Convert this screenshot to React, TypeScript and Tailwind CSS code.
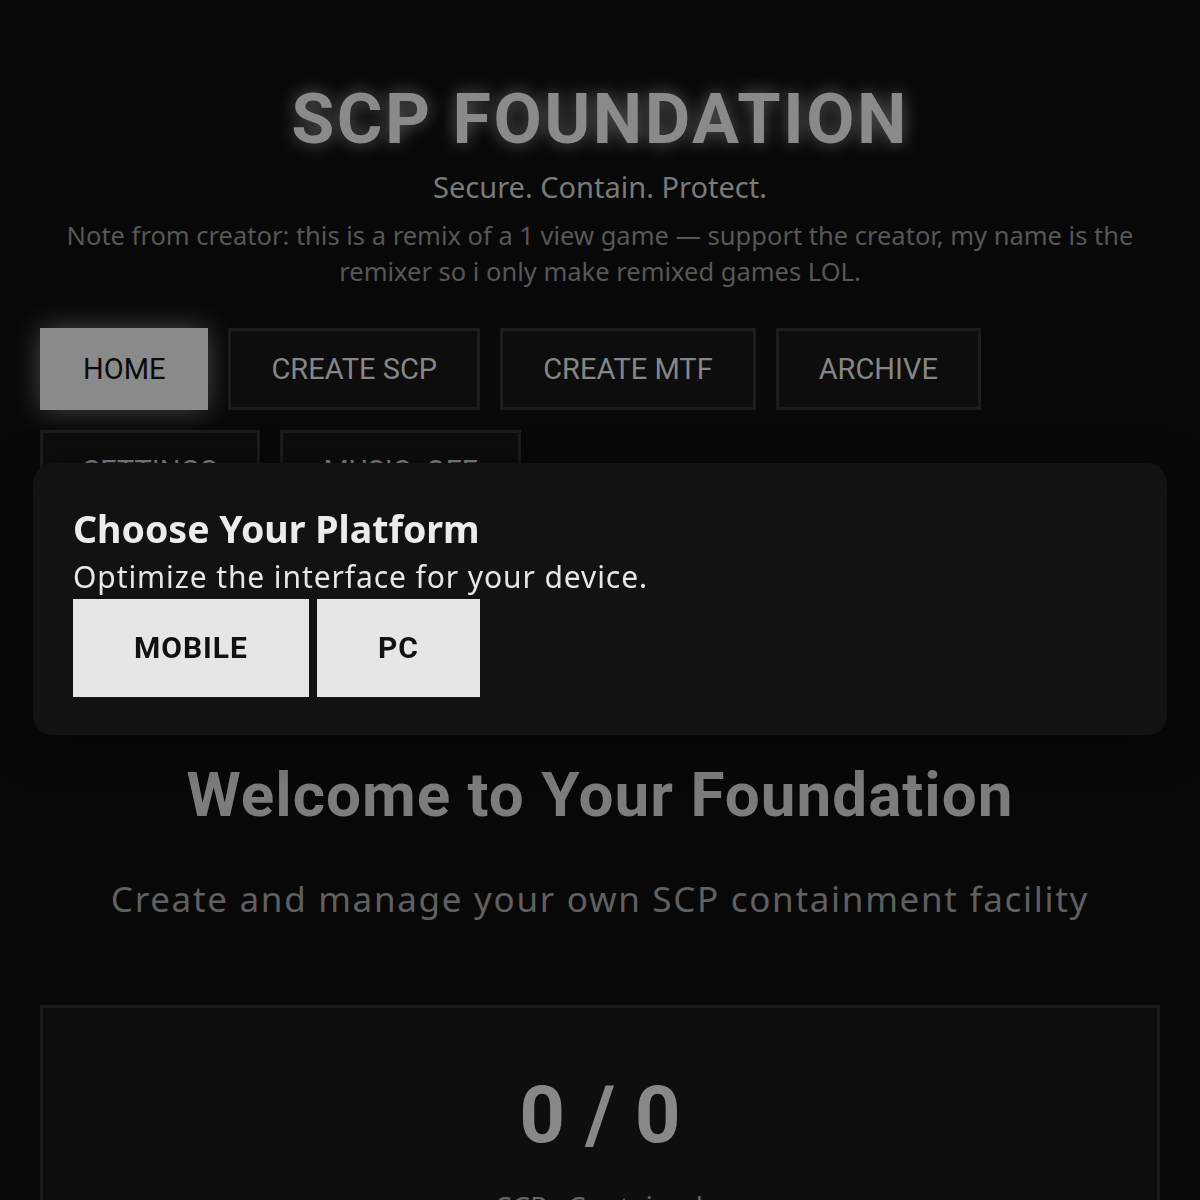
import React, { useState } from 'react';

const navItems = ['HOME', 'CREATE SCP', 'CREATE MTF', 'ARCHIVE', 'SETTINGS', 'MUSIC: OFF'];

export default function App() {
  const [active, setActive] = useState('HOME');
  const [platform, setPlatform] = useState<'mobile' | 'pc' | null>(null);
  const contained = 0;
  const total = 0;

  return (
    <div className="min-h-screen bg-[#080808] font-['Noto_Sans',sans-serif] overflow-hidden">
      {/* header */}
      <header className="text-center pt-[84px] px-10">
        <h1 className="font-['Roboto',sans-serif] font-bold text-[70px] leading-none tracking-[2.5px] text-[#8a8a8a] [text-shadow:0_0_18px_rgba(255,255,255,0.35)]">
          SCP FOUNDATION
        </h1>
        <p className="mt-[11px] text-[29px] text-[#7a7a7a]">Secure. Contain. Protect.</p>
        <p className="mt-[8px] text-[25.5px] leading-[36px] text-[#575757] max-w-[1120px] mx-auto">
          Note from creator: this is a remix of a 1 view game — support the creator, my name is the remixer so i only make remixed games LOL.
        </p>
      </header>

      {/* nav */}
      <nav className="flex flex-wrap gap-5 px-10 mt-[39px]">
        {navItems.map((item) => (
          <button
            key={item}
            onClick={() => setActive(item)}
            className={
              active === item
                ? "px-10 py-[22px] border-[3px] border-[#8a8a8a] bg-[#8a8a8a] text-[#0a0a0a] font-['Roboto',sans-serif] text-[29px] leading-[32px] shadow-[0_0_28px_rgba(255,255,255,0.25)]"
                : "px-10 py-[22px] border-[3px] border-[#1c1c1c] bg-[#0d0d0d] text-[#868686] font-['Roboto',sans-serif] text-[29px] leading-[32px]"
            }
          >
            {item}
          </button>
        ))}
      </nav>

      {/* home */}
      <main className="px-10">
        <h2 className="mt-[252px] text-center font-['Roboto',sans-serif] font-bold text-[62px] leading-none tracking-[1px] text-[#7c7c7c]">
          Welcome to Your Foundation
        </h2>
        <p className="mt-[47px] text-center text-[35px] tracking-[1.7px] text-[#606060]">
          Create and manage your own SCP containment facility
        </p>

        <div className="mt-[80px] border-[3px] border-[#1a1a1a] bg-[#0e0e0e] pt-[67px] pb-10 text-center">
          <div className="font-['Roboto',sans-serif] font-bold text-[80px] leading-none text-[#888888]">
            {contained} / {total}
          </div>
          <div className="mt-[30px] text-[28px] text-[#666666]">SCPs Contained</div>
        </div>
      </main>

      {/* platform picker */}
      {platform === null && (
        <div className="fixed left-[33px] right-[33px] top-[463px] rounded-[20px] bg-[#121212] px-10 pt-[44px] pb-[38px] shadow-[0_10px_40px_rgba(0,0,0,0.6)]">
          <h3 className="text-[37.5px] font-bold leading-[44px] text-[#ececec]">Choose Your Platform</h3>
          <p className="mt-1 text-[30px] leading-[44px] tracking-[0.9px] text-[#e6e6e6]">Optimize the interface for your device.</p>
          <div className="flex gap-2">
            <button
              onClick={() => setPlatform('mobile')}
              className="bg-[#e6e6e6] px-[61px] py-[32px] font-['Roboto',sans-serif] font-bold text-[30px] leading-[34px] tracking-[1px] text-[#111]"
            >
              MOBILE
            </button>
            <button
              onClick={() => setPlatform('pc')}
              className="bg-[#e6e6e6] px-[61px] py-[32px] font-['Roboto',sans-serif] font-bold text-[30px] leading-[34px] tracking-[1px] text-[#111]"
            >
              PC
            </button>
          </div>
        </div>
      )}
    </div>
  );
}
